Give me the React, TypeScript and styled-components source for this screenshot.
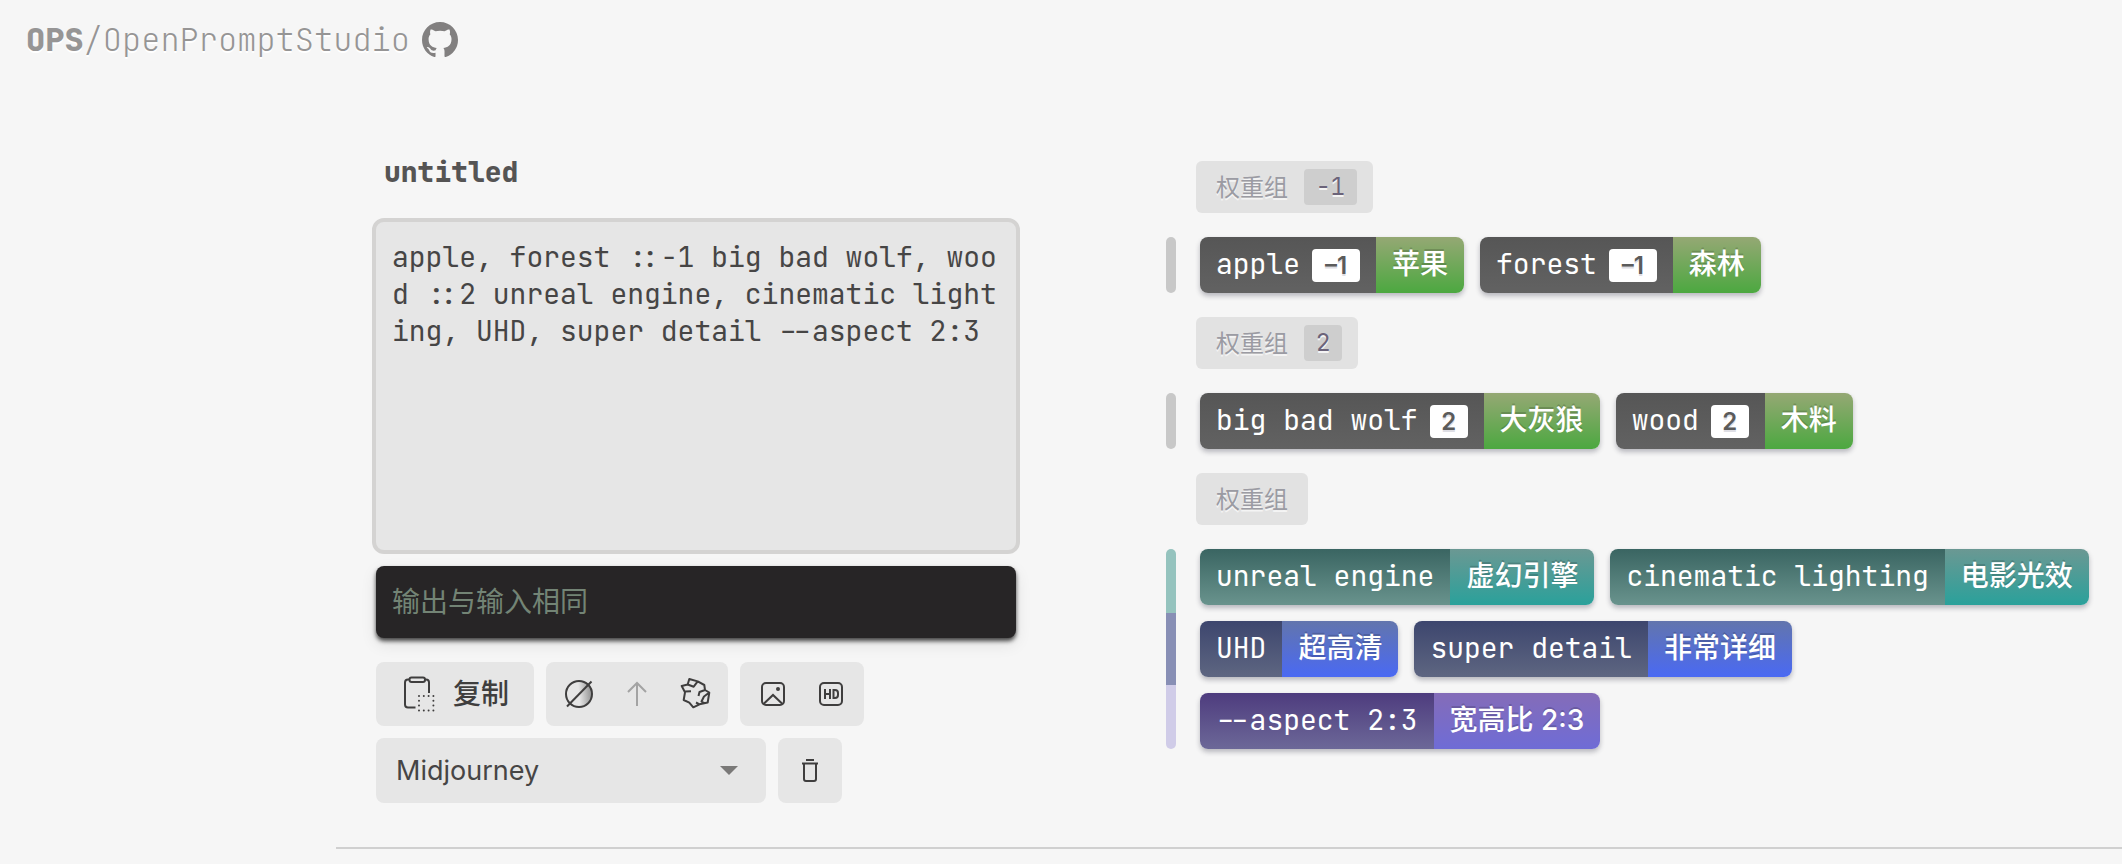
import React, { useState } from "react";
import styled, { createGlobalStyle, css } from "styled-components";

const mono = `"JetBrains Mono", "DejaVu Sans Mono", "Noto Sans CJK SC", monospace`;
const sans = `Inter, "Noto Sans CJK SC", sans-serif`;

const GlobalStyle = createGlobalStyle`
  *, *::before, *::after { box-sizing: border-box; }
  body { margin: 0; background: #f6f6f6; color: #464545; font-family: ${sans}; }
  button, select, textarea { font: inherit; color: inherit; border: 0; margin: 0; }
  h1, h2 { margin: 0; font-weight: 400; }
`;

const Header = styled.header`
  display: flex;
  align-items: center;
  gap: 12px;
  height: 80px;
  padding-left: 26px;
`;

const Brand = styled.h1`
  font-family: ${mono};
  font-size: 32px;
  line-height: 40px;
  color: #969595;
  text-shadow: 0 2px 0 #fff;

  && { font-weight: 200; }
  b { font-weight: 800; }
`;

const GithubLink = styled.a`
  display: flex;
  color: #828080;
`;

const Workspace = styled.main`
  margin-left: 336px;
  padding: 72px 20px 32px 36px;
  display: grid;
  grid-template-columns: 9fr 13fr;
  column-gap: 146px;
  align-items: start;
  border-bottom: 2px solid #d0d0d0;
  box-shadow: 0 2px 0 #fff;
`;

const Editor = styled.section`
  display: flex;
  flex-direction: column;
  min-width: 0;
`;

const Title = styled.h2`
  && { margin: 0 0 26px 12px; font-weight: 800; }
  font-family: ${mono};
  font-size: 28px;
  line-height: 40px;
  color: #555454;
`;

const PromptInput = styled.textarea`
  display: block;
  width: 100%;
  height: 336px;
  padding: 16px;
  resize: none;
  outline: none;
  overflow: hidden;
  background: #e6e6e6;
  && { border: 4px solid #d4d3d2; }
  border-radius: 12px;
  && { font-family: ${mono}; }
  font-size: 28px;
  line-height: 37px;
  word-break: break-all;
`;

const Result = styled.output`
  display: block;
  margin: 12px 4px 24px;
  padding: 16px;
  border-radius: 8px;
  background: #272526;
  color: #738475;
  font-size: 28px;
  line-height: 40px;
  box-shadow: 0 3px 4px rgba(0, 0, 0, 0.7), 0 6px 16px rgba(0, 0, 0, 0.1);
`;

const Toolbar = styled.div`
  display: flex;
  flex-wrap: wrap;
  gap: 12px;
  margin: 0 4px 12px;
`;

const ToolGroup = styled.div`
  display: flex;
  height: 64px;
  padding: 0 4px;
  border-radius: 8px;
  background: #e6e6e6;
`;

const ToolButton = styled.button<{ $faded?: boolean }>`
  display: flex;
  align-items: center;
  justify-content: center;
  gap: 18px;
  min-width: 58px;
  padding: 0;
  background: none;
  cursor: pointer;
  color: ${(p) => (p.$faded ? "#a3a3a3" : "#3f3e3e")};
`;

const CopyButton = styled(ToolButton)`
  width: 150px;
  font-size: 28px;
  line-height: 40px;
  font-weight: 500;
`;

const TrashButton = styled(ToolButton)`
  width: 64px;
  height: 65px;
  border-radius: 8px;
  background: #e6e6e6;
`;

const SelectBox = styled.div`
  position: relative;
  width: 390px;

  svg {
    position: absolute;
    right: 28px;
    top: 28px;
    pointer-events: none;
  }
`;

const Select = styled.select`
  appearance: none;
  width: 100%;
  height: 65px;
  padding: 0 60px 0 20px;
  border-radius: 8px;
  background: #e6e6e6;
  font-size: 27px;
`;

const Board = styled.section`
  display: flex;
  flex-direction: column;
  gap: 24px;
  min-width: 0;
  padding-top: 9px;
`;

const WeightLabel = styled.div`
  display: flex;
  align-items: center;
  align-self: flex-start;
  gap: 16px;
  height: 52px;
  margin-left: 30px;
  padding: 0 16px 0 20px;
  border-radius: 6px;
  background: #e2e2e2;
  color: #9b9ba3;
  font-size: 24px;
  text-shadow: 0 2px 0 #f4f4f4;

  > span { padding-bottom: 4px; }
  &:has(> span:only-child) { padding-right: 20px; }
`;

const WeightValue = styled.b`
  padding: 0 12px;
  border-radius: 4px;
  background: #cecece;
  color: #6b6379;
  font: 400 24px/36px ${mono};
`;

const Lane = styled.div`
  display: flex;
  gap: 24px;
`;

const LaneBar = styled.i<{ $color: string }>`
  flex: none;
  width: 10px;
  background: ${(p) => p.$color};
  ${Lane}:first-child > & { border-top-left-radius: 5px; border-top-right-radius: 5px; }
  ${Lane}:last-child > & { border-bottom-left-radius: 5px; border-bottom-right-radius: 5px; }
`;

const Chips = styled.div`
  display: flex;
  flex-wrap: wrap;
  gap: 16px;
  padding: 8px 0;
  ${Lane}:first-child > & { padding-top: 0; }
  ${Lane}:last-child > & { padding-bottom: 0; }
`;

type Tone = "plain" | "style" | "quality" | "command";

const tones: Record<Tone, { bar: string; dark: [string, string]; light: [string, string] }> = {
  plain: { bar: "#c8c8c8", dark: ["#565656", "#626262"], light: ["#95a874", "#4ca840"] },
  style: { bar: "#95c3be", dark: ["#3a6562", "#69938d"], light: ["#6b9893", "#2aa19b"] },
  quality: { bar: "#888fb5", dark: ["#3d466e", "#5e6681"], light: ["#6275ad", "#4a69f3"] },
  command: { bar: "#d0cce8", dark: ["#4e3c7e", "#6c6898"], light: ["#846cb8", "#6f6cd6"] },
};

const Chip = styled.div`
  display: flex;
  height: 56px;
  border-radius: 8px;
  overflow: hidden;
  color: #fff;
  font-size: 28px;
  line-height: 54px;
  white-space: nowrap;
  box-shadow: 0 3px 5px rgba(40, 40, 60, 0.3);
`;

const half = css`
  display: flex;
  padding: 0 16px;
`;

const Word = styled.span<{ $tone: Tone }>`
  ${half}
  gap: 12px;
  font-family: ${mono};
  background: linear-gradient(${(p) => tones[p.$tone].dark.join(",")});
`;

const Translation = styled.span<{ $tone: Tone }>`
  ${half}
  font-weight: 500;
  text-shadow: 0 -2px 0 rgba(0, 0, 0, 0.16);
  background: linear-gradient(${(p) => tones[p.$tone].light.join(",")});
`;

const ChipWeight = styled.b<{ $signed: boolean }>`
  align-self: center;
  width: ${(p) => (p.$signed ? 48 : 38)}px;
  border-radius: 4px;
  background: #fff;
  color: #5b5b5b;
  font: 600 24px/33px ${sans};
  text-align: center;
  text-shadow: 0 2px 0 #dedee4;
`;

type Tag = { en: string; zh: string; weight?: string };
type LaneData = { tone: Tone; tags: Tag[] };

const groups: { weight?: string; lanes: LaneData[] }[] = [
  {
    weight: "-1",
    lanes: [{ tone: "plain", tags: [{ en: "apple", zh: "苹果", weight: "–1" }, { en: "forest", zh: "森林", weight: "–1" }] }],
  },
  {
    weight: "2",
    lanes: [{ tone: "plain", tags: [{ en: "big bad wolf", zh: "大灰狼", weight: "2" }, { en: "wood", zh: "木料", weight: "2" }] }],
  },
  {
    lanes: [
      { tone: "style", tags: [{ en: "unreal engine", zh: "虚幻引擎" }, { en: "cinematic lighting", zh: "电影光效" }] },
      { tone: "quality", tags: [{ en: "UHD", zh: "超高清" }, { en: "super detail", zh: "非常详细" }] },
      { tone: "command", tags: [{ en: "--aspect 2:3", zh: "宽高比 2:3" }] },
    ],
  },
];

const line = { fill: "none", stroke: "currentColor", strokeWidth: 2, "aria-hidden": true } as const;

const GithubIcon = () => (
  <svg width="36" height="36" viewBox="0 0 16 16" fill="currentColor" aria-hidden="true">
    <path d="M8 0C3.58 0 0 3.58 0 8c0 3.54 2.29 6.53 5.47 7.59.4.07.55-.17.55-.38 0-.19-.01-.82-.01-1.49-2.01.37-2.53-.49-2.69-.94-.09-.23-.48-.94-.82-1.13-.28-.15-.68-.52-.01-.53.63-.01 1.08.58 1.23.82.72 1.21 1.87.87 2.33.66.07-.52.28-.87.51-1.07-1.78-.2-3.64-.89-3.64-3.95 0-.87.31-1.59.82-2.15-.08-.2-.36-1.02.08-2.12 0 0 .67-.21 2.2.82.64-.18 1.32-.27 2-.27s1.36.09 2 .27c1.53-1.04 2.2-.82 2.2-.82.44 1.1.16 1.92.08 2.12.51.56.82 1.27.82 2.15 0 3.07-1.87 3.75-3.65 3.95.29.25.54.73.54 1.48 0 1.07-.01 1.93-.01 2.2 0 .21.15.46.55.38A8.01 8.01 0 0 0 16 8c0-4.42-3.58-8-8-8z" />
  </svg>
);

const PasteIcon = () => (
  <svg width="34" height="36" viewBox="-1 0 34 36" {...line}>
    <path d="M7 3.500H6A3 3 0 0 0 3 6.500v22a3 3 0 0 0 3 3h7.500M23 3.500h1a3 3 0 0 1 3 3V17" />
    <rect x="7.500" y="1.500" width="15.500" height="4.500" rx="2" />
    <rect x="17" y="20" width="14.400" height="14.400" strokeDasharray="0 4.800" strokeLinecap="round" />
  </svg>
);

const ContrastIcon = () => (
  <svg width="32" height="32" viewBox="0 0 32 32" {...line}>
    <defs>
      <linearGradient id="shade" x1="0" y1="0.1" x2="1" y2="0">
        <stop offset="0.45" stopColor="#666" stopOpacity="0" />
        <stop offset="0.9" stopColor="#666" stopOpacity="0.6" />
      </linearGradient>
    </defs>
    <circle cx="16" cy="16" r="13" fill="url(#shade)" />
    <path d="M4 28.500 28.500 3.500" />
  </svg>
);

const UpIcon = () => (
  <svg width="24" height="28" viewBox="0 0 24 28" {...line}>
    <path d="M12 26V3M3 12l9-9 9 9" />
  </svg>
);

const CrumpleIcon = () => (
  <svg width="34" height="34" viewBox="-1 -1 34 34" {...line} strokeLinejoin="round">
    <path d="M10.300 1 18.700 3.400 14.700 8.700 8.700 6.500zM18.700 3.400 25.300 7 26 12 30.300 14.500 28.700 24.500 20.500 26.300 14.300 29.300 10.300 24.600 4.700 22 6 14.300 2.700 8 8.700 6.500M6 13.500 12 13.300M19.500 18 20.500 14 26 12M30.300 14.500 25 18.500 22.500 23.500 25.500 25.200M17 24.500 20.500 26.300" />
  </svg>
);

const ImageIcon = () => (
  <svg width="26" height="26" viewBox="0 0 26 26" {...line}>
    <rect x="2" y="2" width="22" height="22" rx="4" />
    <path d="M3.500 23 13 14l9.500 9" />
    <circle cx="18" cy="8" r="2" fill="currentColor" stroke="none" />
  </svg>
);

const HdIcon = () => (
  <svg width="26" height="26" viewBox="0 0 26 26" {...line}>
    <rect x="2" y="2" width="22" height="22" rx="4" />
    <path d="M7 8v10M12 8v10M7 13h5M15.500 8v10M15.500 9h1.500q3 0 3 3v2q0 3-3 3h-1.500" />
  </svg>
);

const TrashIcon = () => (
  <svg width="20" height="26" viewBox="0 0 20 26" {...line}>
    <path d="M6 2h8M2 5.500h16M4 5.500V21a2 2 0 0 0 2 2h8a2 2 0 0 0 2-2V5.500" />
  </svg>
);

const CaretIcon = () => (
  <svg width="18" height="9" viewBox="0 0 18 9" fill="#7a7978" aria-hidden="true">
    <path d="M0 0h18L9 9z" />
  </svg>
);

export default function App() {
  const [prompt, setPrompt] = useState(
    "apple, forest ::-1 big bad wolf, wood ::2 unreal engine, cinematic lighting, UHD, super detail --aspect 2:3"
  );

  return (
    <>
      <GlobalStyle />
      <Header>
        <Brand>
          <b>OPS</b>/OpenPromptStudio
        </Brand>
        <GithubLink href="#github" aria-label="GitHub">
          <GithubIcon />
        </GithubLink>
      </Header>
      <Workspace>
        <Editor>
          <Title>untitled</Title>
          <PromptInput aria-label="Prompt" spellCheck={false} value={prompt} onChange={(e) => setPrompt(e.target.value)} />
          <Result>输出与输入相同</Result>
          <Toolbar>
            <ToolGroup>
              <CopyButton>
                <PasteIcon />
                复制
              </CopyButton>
            </ToolGroup>
            <ToolGroup>
              <ToolButton aria-label="Disable styles"><ContrastIcon /></ToolButton>
              <ToolButton aria-label="Move up" $faded><UpIcon /></ToolButton>
              <ToolButton aria-label="Clean up"><CrumpleIcon /></ToolButton>
            </ToolGroup>
            <ToolGroup>
              <ToolButton aria-label="Export image"><ImageIcon /></ToolButton>
              <ToolButton aria-label="Export HD image"><HdIcon /></ToolButton>
            </ToolGroup>
          </Toolbar>
          <Toolbar>
            <SelectBox>
              <Select aria-label="Target" defaultValue="Midjourney">
                <option>Midjourney</option>
              </Select>
              <CaretIcon />
            </SelectBox>
            <TrashButton aria-label="Delete"><TrashIcon /></TrashButton>
          </Toolbar>
        </Editor>
        <Board>
          {groups.map((group, i) => (
            <React.Fragment key={i}>
              <WeightLabel>
                <span>权重组</span>
                {group.weight && <WeightValue>{group.weight}</WeightValue>}
              </WeightLabel>
              <div>
                {group.lanes.map((lane) => (
                  <Lane key={lane.tone}>
                    <LaneBar $color={tones[lane.tone].bar} />
                    <Chips>
                      {lane.tags.map((tag) => (
                        <Chip key={tag.en}>
                          <Word $tone={lane.tone}>
                            {tag.en}
                            {tag.weight && <ChipWeight $signed={tag.weight.length > 1}>{tag.weight}</ChipWeight>}
                          </Word>
                          <Translation $tone={lane.tone}>{tag.zh}</Translation>
                        </Chip>
                      ))}
                    </Chips>
                  </Lane>
                ))}
              </div>
            </React.Fragment>
          ))}
        </Board>
      </Workspace>
    </>
  );
}
